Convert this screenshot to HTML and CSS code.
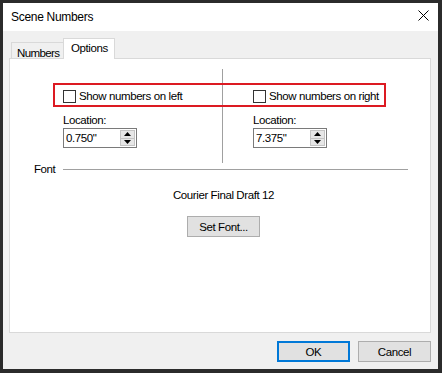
FILE: index.html
```html
<!DOCTYPE html>
<html>
<head>
<meta charset="utf-8">
<link rel="stylesheet" href="styles.css">
</head>
<body>
<div class="window">
  <div class="titlebar">
    <span class="title">Scene Numbers</span>
    <svg class="close" width="11" height="11" viewBox="0 0 11 11"><path d="M0.5 0.5 L10.5 10.5 M10.5 0.5 L0.5 10.5" stroke="#000" stroke-width="1" fill="none"/></svg>
  </div>
  <div class="content">
    <div class="tabs">
      <div class="tab">Numbers</div>
      <div class="tab active">Options</div>
    </div>
    <div class="panel">
      <div class="cols">
        <div class="col left">
          <div class="check-row"><span class="checkbox"></span><span class="label">Show numbers on left</span></div>
          <div class="loc-label">Location:</div>
          <div class="spin-input"><span class="val">0.750"</span>
            <span class="spinner"><span class="sbtn"><svg width="7" height="4" viewBox="0 0 7 4"><path d="M3.5 0 L7 4 L0 4 Z" fill="#000"/></svg></span><span class="sbtn"><svg width="7" height="4" viewBox="0 0 7 4"><path d="M0 0 L7 0 L3.5 4 Z" fill="#000"/></svg></span></span>
          </div>
        </div>
        <div class="col right">
          <div class="check-row"><span class="checkbox"></span><span class="label">Show numbers on right</span></div>
          <div class="loc-label">Location:</div>
          <div class="spin-input"><span class="val">7.375"</span>
            <span class="spinner"><span class="sbtn"><svg width="7" height="4" viewBox="0 0 7 4"><path d="M3.5 0 L7 4 L0 4 Z" fill="#000"/></svg></span><span class="sbtn"><svg width="7" height="4" viewBox="0 0 7 4"><path d="M0 0 L7 0 L3.5 4 Z" fill="#000"/></svg></span></span>
          </div>
        </div>
      </div>
      <div class="font-row"><span class="font-label">Font</span><span class="rule"></span></div>
      <div class="center">
        <div class="font-name">Courier Final Draft 12</div>
        <button class="btn setfont">Set Font...</button>
      </div>
      <div class="highlight"></div>
    </div>
    <div class="buttons">
      <button class="btn ok">OK</button>
      <button class="btn">Cancel</button>
    </div>
  </div>
</div>
</body>
</html>
```
FILE: styles.css
```css
html, body {
  margin: 0;
  padding: 0;
}
body {
  width: 442px;
  height: 373px;
  overflow: hidden;
  background: #2b2b2b;
  font-family: "Liberation Sans", Arial, sans-serif;
  font-size: 11.5px;
  letter-spacing: -0.4px;
  color: #000;
}
.window {
  margin: 3px 0 0 3px;
  width: 435px;
  height: 366px;
  background: #f0f0f0;
  display: flex;
  flex-direction: column;
}
.titlebar {
  height: 28px;
  background: #fff;
  display: flex;
  align-items: flex-start;
  padding-left: 8px;
  box-sizing: border-box;
}
.title {
  font-size: 12px;
  letter-spacing: -0.3px;
  line-height: 14px;
  margin-top: 7px;
}
.close {
  margin-left: auto;
  margin-right: 9px;
  margin-top: 7px;
}
.content {
  flex: 1;
  padding: 7px 7px 0 6px;
  display: flex;
  flex-direction: column;
}
.tabs {
  display: flex;
  align-items: flex-end;
  height: 20px;
  padding-left: 2px;
  position: relative;
  z-index: 1;
}
.tab {
  box-sizing: border-box;
  width: 52px;
  height: 16px;
  border: 1px solid #d9d9d9;
  border-bottom: none;
  border-right: none;
  background: #f0f0f0;
  padding: 4px 0 0 5px;
  line-height: 12px;
  letter-spacing: -0.6px;
  white-space: nowrap;
  overflow: hidden;
}
.tab.active {
  height: 21px;
  margin-bottom: -1px;
  background: #fff;
  border-right: 1px solid #d9d9d9;
  padding: 3px 0 0 7px;
  letter-spacing: -0.4px;
}
.panel {
  position: relative;
  box-sizing: border-box;
  height: 275px;
  background: #fff;
  border: 1px solid #d9d9d9;
}
.cols {
  display: grid;
  grid-template-columns: 212px 1fr;
  margin-top: 10px;
  height: 94px;
}
.col {
  padding-top: 21px;
}
.col.left {
  padding-left: 53px;
}
.col.right {
  border-left: 1px solid #a0a0a0;
  padding-left: 30px;
}
.check-row {
  display: flex;
  align-items: center;
  height: 13px;
}
.checkbox {
  box-sizing: border-box;
  width: 13px;
  height: 13px;
  border: 1px solid #333;
  background: #fff;
}
.label {
  margin-left: 3px;
  line-height: 13px;
}
.loc-label {
  margin-top: 11px;
  line-height: 13px;
}
.spin-input {
  box-sizing: border-box;
  margin-top: 1px;
  width: 74px;
  height: 20px;
  border: 1px solid #7a7a7a;
  display: flex;
  align-items: center;
  padding-left: 2px;
}
.val {
  flex: 1;
}
.spinner {
  display: flex;
  flex-direction: column;
  margin-right: 1px;
  width: 15px;
  height: 16px;
}
.sbtn {
  box-sizing: border-box;
  flex: 1;
  background: #e6e6e6;
  border: 1px solid #c4c4c4;
  display: flex;
  align-items: center;
  justify-content: center;
}
.sbtn + .sbtn {
  border-top: none;
}
.font-row {
  display: flex;
  align-items: center;
  height: 12px;
  padding: 0 22px 0 24px;
}
.font-label {
  line-height: 12px;
}
.rule {
  flex: 1;
  height: 1px;
  background: #a0a0a0;
  margin-left: 8px;
}
.center {
  display: flex;
  flex-direction: column;
  align-items: center;
  padding-left: 7px;
}
.font-name {
  margin-top: 13px;
  line-height: 14px;
}
.btn {
  box-sizing: border-box;
  width: 73px;
  height: 21px;
  background: #e1e1e1;
  border: 1px solid #adadad;
  font-family: "Liberation Sans", Arial, sans-serif;
  font-size: 11.5px;
  letter-spacing: -0.4px;
  color: #000;
  padding: 0;
  margin: 0;
}
.setfont {
  margin-top: 14px;
}
.highlight {
  position: absolute;
  left: 43px;
  top: 24px;
  width: 333px;
  height: 24px;
  box-sizing: border-box;
  border: 2px solid #dc1a22;
}
.buttons {
  display: flex;
  justify-content: flex-end;
  gap: 8px;
  margin-top: 8px;
}
.btn.ok {
  border: 2px solid #0078d7;
}
```
